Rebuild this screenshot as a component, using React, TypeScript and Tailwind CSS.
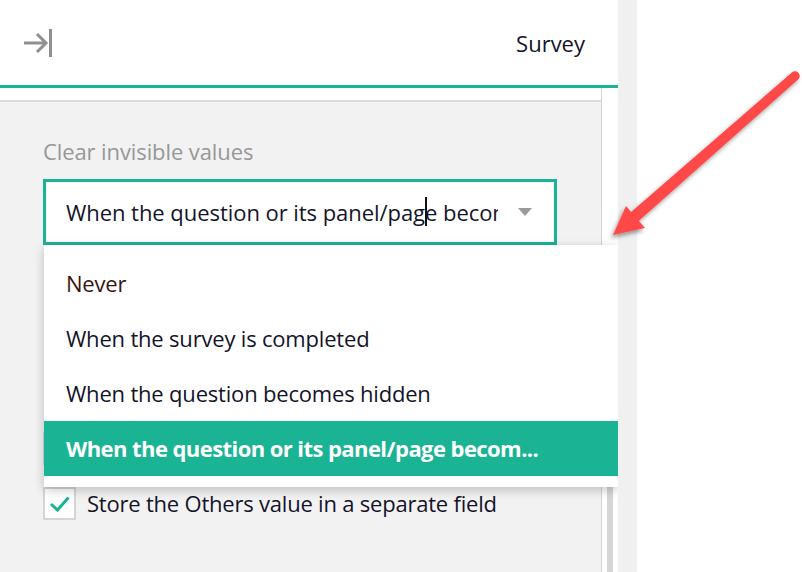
export default function App() {
  const font = { fontFamily: '"Open Sans", "Noto Sans", sans-serif' };
  return (
    <div className="relative flex h-[572px] w-[802px] overflow-hidden bg-white text-[22px] text-[#14142a]" style={font}>
      <div className="relative flex h-full w-[618px] flex-col overflow-hidden">
        <header className="flex h-[88px] shrink-0 items-center justify-between border-b-[3px] border-[#1ab394] pl-[22px] pr-[33px]">
          <svg className="mt-[1px]" width="32" height="30" viewBox="0 0 32 30" fill="none" stroke="#8f8f8f" strokeWidth="3">
            <path d="M2 15 H24" />
            <path d="M15 6 L24 15 L15 24" />
            <path d="M28.5 1 V29" strokeWidth="3" />
          </svg>
          <span className="leading-none">Survey</span>
        </header>
        <div className="flex min-h-0 flex-1">
          <div className="flex w-[602px] flex-col border-r border-[#d4d4d4] pt-[12px]">
            <div className="flex-1 border-t-2 border-[#dcdcdc] bg-[#f2f2f2] pl-[43px] pt-[34px]">
              <div className="h-[30px] leading-[30px] tracking-[-0.1px] text-[#979797]">Clear invisible values</div>
              <div className="mt-[13px] flex h-[66px] w-[514px] items-center border-[3px] border-[#1ab394] bg-white pl-[20px] pr-[21px]">
                <div className="relative w-[432px] overflow-hidden whitespace-nowrap tracking-[-0.05px]">
                  When the question or its panel/page becomes hidden
                  <span className="absolute left-[359px] top-[1px] h-[29px] w-[2px] bg-[#111111]" />
                </div>
                <div className="ml-[20px] h-0 w-0 border-x-[7px] border-t-[8px] border-x-transparent border-t-[#9a9a9a]" />
              </div>
              <div className="mt-[187px] h-[33px] w-[33px] border-2 border-[#d5d5d5] bg-white" />
              <div className="mt-[22px] flex items-center gap-[11px]">
                <div className="flex h-[33px] w-[33px] items-center justify-center border-2 border-[#d5d5d5] bg-white">
                  <svg width="22" height="18" viewBox="0 0 22 18" fill="none" stroke="#1ab394" strokeWidth="3">
                    <path d="M2 9 L8.5 15 L19.5 2.5" />
                  </svg>
                </div>
                <span className="tracking-[-0.21px]">Store the Others value in a separate field</span>
              </div>
            </div>
          </div>
          <div className="flex flex-1 pl-[5px] pt-[200px]">
            <div className="h-full w-[6px] bg-[#d6d6d6]" />
          </div>
        </div>

        <div className="absolute left-[44px] top-[245px] w-[574px] bg-white py-[11px] shadow-[0_3px_10px_rgba(0,0,0,0.22)]">
          <div className="flex h-[55px] items-center pl-[22px] tracking-[-0.19px] text-[#3a1414]">Never</div>
          <div className="flex h-[55px] items-center pl-[22px] tracking-[-0.19px]">When the survey is completed</div>
          <div className="flex h-[55px] items-center pl-[22px] tracking-[-0.19px]">When the question becomes hidden</div>
          <div className="flex h-[55px] items-center bg-[#1ab394] pl-[22px] font-bold tracking-[-0.57px] text-white">When the question or its panel/page becom...</div>
        </div>
      </div>
      <div className="w-[19px] bg-[#f0f0f0]" />
      <div className="flex-1 bg-white" />

      <svg className="absolute left-[600px] top-[60px]" width="202" height="190" viewBox="600 60 202 190" fill="none">
        <defs>
          <filter id="s" x="-20%" y="-20%" width="140%" height="140%">
            <feDropShadow dx="-2" dy="3" stdDeviation="2" floodColor="#000" floodOpacity="0.4" />
          </filter>
        </defs>
        <g filter="url(#s)">
          <path d="M798 79.5 L792 72.5 L630 213 L637.5 222 Z" fill="#ff4848" />
          <circle cx="795" cy="76" r="4.7" fill="#ff4848" />
          <path d="M613 235 L626 206 L645 228 Z" fill="#ff4848" />
        </g>
      </svg>
    </div>
  );
}
